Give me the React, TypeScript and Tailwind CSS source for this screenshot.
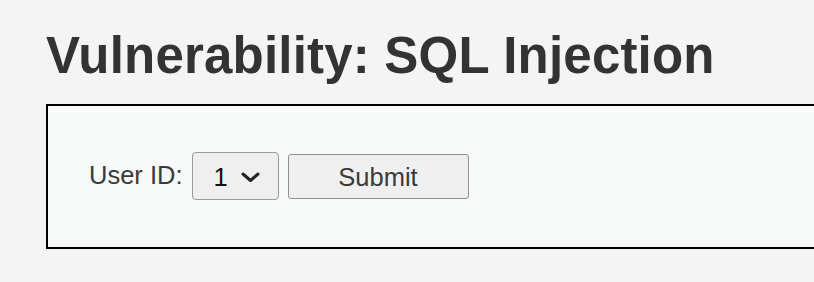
import React, { useState } from 'react';

const App: React.FC = () => {
  const [userId, setUserId] = useState('1');

  return (
    <div className="w-full h-[282px] overflow-hidden bg-[#f4f4f4] font-['Liberation_Sans',Arial,sans-serif]">
      <h1 className="pt-[30px] pl-[46px] text-[51px] leading-[51px] tracking-[0.2px] font-bold text-[#333333] whitespace-nowrap">
        Vulnerability: SQL Injection
      </h1>

      {/* Form box */}
      <div className="mt-[23px] ml-[46px] w-[820px] border-2 border-black bg-[#f8f9f9] pl-[41px] pt-[46px] pb-[47px]">
        <form className="flex items-center" onSubmit={(e) => e.preventDefault()}>
          <span className="text-[25.5px] leading-none text-[#3a3a3a] whitespace-nowrap">User ID:</span>

          <div className="relative ml-[9px] w-[87px] h-[48px]">
            <select
              value={userId}
              onChange={(e) => setUserId(e.target.value)}
              className="appearance-none w-full h-full rounded-[4px] border border-[#999999] bg-[#efefef] pl-[21px] pt-[3px] text-[25.5px] text-[#111111] outline-none"
            >
              <option value="1">1</option>
              <option value="2">2</option>
              <option value="3">3</option>
              <option value="4">4</option>
              <option value="5">5</option>
            </select>
            <svg
              className="pointer-events-none absolute left-[49px] top-[20px]"
              width="19"
              height="11"
              viewBox="0 0 19 11"
              fill="none"
            >
              <path d="M2 2 L9.5 8.5 L17 2" stroke="#222222" strokeWidth="3" strokeLinecap="round" strokeLinejoin="round" />
            </svg>
          </div>

          <button
            type="submit"
            className="ml-[9px] w-[181px] h-[45px] rounded-[3px] border border-[#8f8f8f] bg-[#efefef] pt-[3px] text-[25.5px] leading-none text-[#3a3a3a]"
          >
            Submit
          </button>
        </form>
      </div>
    </div>
  );
};

export default App;
